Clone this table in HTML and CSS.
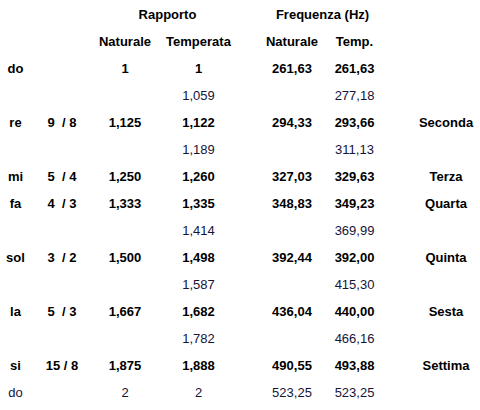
FILE: index.html
```html
<!DOCTYPE html>
<html lang="it">
<head>
<meta charset="utf-8">
<title>Rapporti</title>
<link rel="stylesheet" href="styles.css">
</head>
<body>
<table class="scale">
  <colgroup>
    <col class="c-note">
    <col class="c-frac">
    <col class="c-nat">
    <col class="c-temp">
    <col class="c-fnat">
    <col class="c-ftemp">
    <col class="c-int">
  </colgroup>
  <tr class="b">
    <td></td><td></td>
    <td colspan="2" class="rapporto">Rapporto</td>
    <td colspan="2" class="freq">Frequenza (Hz)</td>
    <td></td>
  </tr>
  <tr class="b">
    <td></td><td></td>
    <td>Naturale</td><td>Temperata</td>
    <td class="fnat">Naturale</td><td>Temp.</td><td></td>
  </tr>
  <tr class="b">
    <td class="note">do</td><td></td><td>1</td><td>1</td>
    <td class="fnat">261,63</td><td>261,63</td><td></td>
  </tr>
  <tr class="r">
    <td></td><td></td><td></td><td>1,059</td>
    <td class="fnat"></td><td>277,18</td><td></td>
  </tr>
  <tr class="b">
    <td class="note">re</td><td>9&nbsp; / 8</td><td>1,125</td><td>1,122</td>
    <td class="fnat">294,33</td><td>293,66</td><td class="int">Seconda</td>
  </tr>
  <tr class="r">
    <td></td><td></td><td></td><td>1,189</td>
    <td class="fnat"></td><td>311,13</td><td></td>
  </tr>
  <tr class="b">
    <td class="note">mi</td><td>5&nbsp; / 4</td><td>1,250</td><td>1,260</td>
    <td class="fnat">327,03</td><td>329,63</td><td class="int">Terza</td>
  </tr>
  <tr class="b">
    <td class="note">fa</td><td>4&nbsp; / 3</td><td>1,333</td><td>1,335</td>
    <td class="fnat">348,83</td><td>349,23</td><td class="int">Quarta</td>
  </tr>
  <tr class="r">
    <td></td><td></td><td></td><td>1,414</td>
    <td class="fnat"></td><td>369,99</td><td></td>
  </tr>
  <tr class="b">
    <td class="note">sol</td><td>3&nbsp; / 2</td><td>1,500</td><td>1,498</td>
    <td class="fnat">392,44</td><td>392,00</td><td class="int">Quinta</td>
  </tr>
  <tr class="r">
    <td></td><td></td><td></td><td>1,587</td>
    <td class="fnat"></td><td>415,30</td><td></td>
  </tr>
  <tr class="b">
    <td class="note">la</td><td>5&nbsp; / 3</td><td>1,667</td><td>1,682</td>
    <td class="fnat">436,04</td><td>440,00</td><td class="int">Sesta</td>
  </tr>
  <tr class="r">
    <td></td><td></td><td></td><td>1,782</td>
    <td class="fnat"></td><td>466,16</td><td></td>
  </tr>
  <tr class="b">
    <td class="note">si</td><td>15 / 8</td><td>1,875</td><td>1,888</td>
    <td class="fnat">490,55</td><td>493,88</td><td class="int">Settima</td>
  </tr>
  <tr class="r">
    <td class="note">do</td><td></td><td>2</td><td>2</td>
    <td class="fnat">523,25</td><td>523,25</td><td></td>
  </tr>
</table>
</body>
</html>
```
FILE: styles.css
```css
html, body {
  margin: 0;
  padding: 0;
  background: #ffffff;
}
body {
  font-family: "Liberation Sans", Arial, sans-serif;
  font-size: 13px;
  color: #000000;
}
.scale {
  margin-top: 1px;
  width: 480px;
  table-layout: fixed;
  border-collapse: collapse;
}
.c-note { width: 36px; }
.c-frac { width: 52px; }
.c-nat { width: 74px; }
.c-temp { width: 73px; }
.c-fnat { width: 89px; }
.c-ftemp { width: 61px; }
.c-int { width: 95px; }
.scale td {
  height: 27px;
  padding: 0;
  text-align: center;
  vertical-align: middle;
  white-space: nowrap;
  line-height: 15px;
}
.scale tr.b td {
  font-weight: bold;
  color: #000000;
}
.scale tr.r td {
  font-weight: normal;
  color: #14143a;
}
.scale td.note {
  text-align: center;
  padding-right: 5px;
}
.scale td.fnat {
  padding-left: 25px;
}
.scale td.freq {
  padding-left: 25px;
}
.scale td.rapporto {
  padding-left: 12px;
}
.scale td.int {
  padding-left: 27px;
}
```
